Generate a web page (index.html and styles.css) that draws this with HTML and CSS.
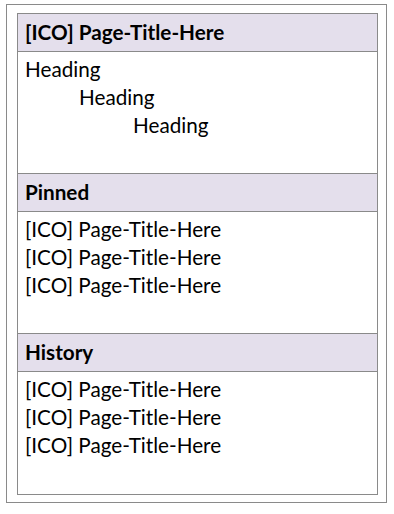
FILE: index.html
```html
<!DOCTYPE html>
<html>
<head>
<meta charset="utf-8">
<link rel="stylesheet" href="styles.css">
</head>
<body>
<div class="frame">
  <div class="panel">
    <div class="section-head">[ICO] Page-Title-Here</div>
    <div class="section-body">
      <div class="row">Heading</div>
      <div class="row indent-1">Heading</div>
      <div class="row indent-2">Heading</div>
    </div>
    <div class="section-head">Pinned</div>
    <div class="section-body">
      <div class="row">[ICO] Page-Title-Here</div>
      <div class="row">[ICO] Page-Title-Here</div>
      <div class="row">[ICO] Page-Title-Here</div>
    </div>
    <div class="section-head">History</div>
    <div class="section-body last">
      <div class="row">[ICO] Page-Title-Here</div>
      <div class="row">[ICO] Page-Title-Here</div>
      <div class="row">[ICO] Page-Title-Here</div>
    </div>
  </div>
</div>
</body>
</html>
```
FILE: styles.css
```css
html, body {
  margin: 0;
  padding: 0;
  background: #ffffff;
}
body {
  font-family: Lato, "Open Sans", sans-serif;
  color: #000000;
}
.frame {
  margin: 4px 0 0 6px;
  border: 1px solid #8a8a8a;
  padding: 8px 8px 7px 10px;
  box-sizing: content-box;
  width: 361px;
  height: 482px;
}
.panel {
  border: 1px solid #8a8a8a;
  display: flex;
  flex-direction: column;
  height: 480px;
}
.section-head {
  flex: none;
  height: 37px;
  background: #e4dfec;
  font-weight: bold;
  font-size: 20.7px;
  line-height: 37px;
  padding-left: 7px;
  border-bottom: 1px solid #8a8a8a;
}
.section-body {
  flex: none;
  height: 122px;
  padding: 3px 0 0 7px;
  box-sizing: border-box;
  border-bottom: 1px solid #8a8a8a;
}
.section-body.last {
  border-bottom: none;
  flex: 1;
}
.row {
  font-size: 20.7px;
  line-height: 28px;
  white-space: nowrap;
}
.indent-1 { padding-left: 54px; }
.indent-2 { padding-left: 108px; }
```
